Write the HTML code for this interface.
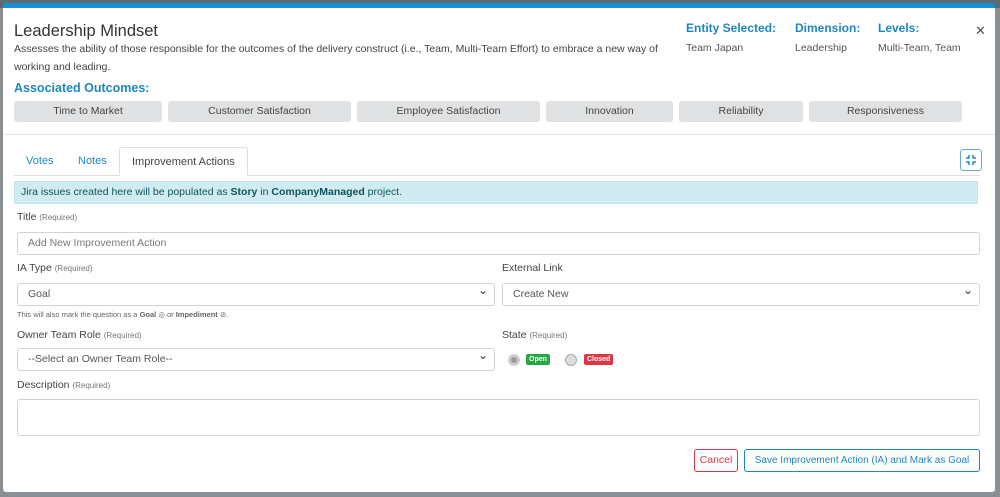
<!DOCTYPE html>
<html><head><style>
*{box-sizing:border-box;margin:0;padding:0}
body{width:1000px;height:497px;overflow:hidden;background:#8a8f94;font-family:"Liberation Sans",sans-serif;color:#333;position:relative}
.top{position:absolute;left:0;top:0;width:1000px;height:8px;background:#5b6b73}
.modal{position:absolute;left:3px;top:3px;width:992px;height:489px;background:#fff;border-top:5px solid #1a8fd0;border-radius:3px}
.blue{color:#1f87c0;font-weight:bold}
h1{position:absolute;left:11px;top:14px;font-size:16.5px;font-weight:normal;color:#333}
.desc{position:absolute;left:11px;top:32px;font-size:10.5px;line-height:18px;color:#444;width:670px}
.ao{position:absolute;left:11px;top:73px;font-size:12.5px}
.chip{position:absolute;top:93px;height:21px;background:#dfe1e3;border-radius:3px;font-size:10.5px;color:#444;text-align:center;line-height:21px}
.hd{position:absolute;top:13px;font-size:12px}
.hv{position:absolute;top:34px;font-size:10.5px;color:#555}
.x{position:absolute;left:972px;top:15px;font-size:13px;color:#555}
.sep{position:absolute;left:0;top:126px;width:992px;border-top:1px solid #e3e3e3}
.tabs{position:absolute;left:11px;top:139px;height:29px;width:966px;border-bottom:1px solid #ddd}
.tab{position:absolute;top:0;height:29px;line-height:28px;font-size:11px;color:#1f87c0;padding:0 12px}
.tab.a{color:#444;border:1px solid #ddd;border-bottom:1px solid #fff;border-radius:3px 3px 0 0;background:#fff;height:29px}
.cmp{position:absolute;left:957px;top:141px;width:22px;height:22px;border:1px solid #6aa8cf;border-radius:3px}
.info{position:absolute;left:11px;top:173px;width:964px;height:23px;background:#d1ecf1;border:1px solid #bee5eb;font-size:10.5px;line-height:21px;padding-left:6px;color:#0c5460}
.lbl{position:absolute;font-size:10.5px;color:#444}
.lbl small{font-size:8px;color:#777}
.inp{position:absolute;height:23px;border:1px solid #ced4da;border-radius:3px;font-size:10.5px;line-height:21px;padding-left:10px;color:#555}
.sel:after{content:"⌄";position:absolute;right:6px;top:-4px;font-size:12px;color:#333}
.badge{display:inline-block;font-size:7px;font-weight:bold;color:#fff;border-radius:2px;padding:0 3px;height:11px;line-height:11px}
.radio{position:absolute;width:12px;height:12px;border-radius:50%;border:1px solid #aaa;background:#ddd}
.btn{position:absolute;top:441px;height:23px;border-radius:3px;font-size:10.5px;line-height:21px;text-align:center;white-space:nowrap}
</style></head><body>
<div class="top"></div>
<div class="modal">
<h1>Leadership Mindset</h1>
<div class="desc">Assesses the ability of those responsible for the outcomes of the delivery construct (i.e., Team, Multi-Team Effort) to embrace a new way of working and leading.</div>
<div class="ao blue">Associated Outcomes:</div>
<div class="chip" style="left:11px;width:148px">Time to Market</div>
<div class="chip" style="left:165px;width:183px">Customer Satisfaction</div>
<div class="chip" style="left:354px;width:183px">Employee Satisfaction</div>
<div class="chip" style="left:543px;width:127px">Innovation</div>
<div class="chip" style="left:676px;width:124px">Reliability</div>
<div class="chip" style="left:806px;width:153px">Responsiveness</div>
<div class="hd blue" style="left:683px">Entity Selected:</div>
<div class="hv" style="left:683px">Team Japan</div>
<div class="hd blue" style="left:792px">Dimension:</div>
<div class="hv" style="left:792px">Leadership</div>
<div class="hd blue" style="left:875px">Levels:</div>
<div class="hv" style="left:875px">Multi-Team, Team</div>
<div class="x">✕</div>
<div class="sep"></div>
<div class="tabs">
<div class="tab" style="left:0">Votes</div>
<div class="tab" style="left:52px">Notes</div>
<div class="tab a" style="left:105px">Improvement Actions</div>
</div>
<div class="cmp"><svg width="20" height="20" viewBox="0 0 20 20" fill="none" stroke="#1f87c0" stroke-width="1.5"><path d="M8 5v3H5M12 5v3h3M8 15v-3H5M12 15v-3h3"/></svg></div>
<div class="info">Jira issues created here will be populated as <b>Story</b> in <b>CompanyManaged</b> project.</div>
<div class="lbl" style="left:14px;top:203px">Title <small>(Required)</small></div>
<div class="inp" style="left:14px;top:224px;width:963px;color:#777">Add New Improvement Action</div>
<div class="lbl" style="left:14px;top:254px">IA Type <small>(Required)</small></div>
<div class="inp sel" style="left:14px;top:275px;width:478px">Goal</div>
<div class="lbl" style="left:499px;top:254px">External Link</div>
<div class="inp sel" style="left:499px;top:275px;width:478px">Create New</div>
<div class="lbl" style="left:14px;top:302px;font-size:7.5px;color:#666">This will also mark the question as a <b>Goal</b> ◎ or <b>Impediment</b> ⊘.</div>
<div class="lbl" style="left:14px;top:321px">Owner Team Role <small>(Required)</small></div>
<div class="inp sel" style="left:14px;top:340px;width:478px">--Select an Owner Team Role--</div>
<div class="lbl" style="left:499px;top:321px">State <small>(Required)</small></div>
<div class="radio" style="left:505px;top:346px;background:#999;border:3px solid #ccc"></div>
<div class="badge" style="position:absolute;left:523px;top:346px;background:#28a745">Open</div>
<div class="radio" style="left:562px;top:346px"></div>
<div class="badge" style="position:absolute;left:581px;top:346px;background:#dc3545">Closed</div>
<div class="lbl" style="left:14px;top:371px">Description <small>(Required)</small></div>
<div class="inp" style="left:14px;top:391px;width:963px;height:37px"></div>
<div class="btn" style="left:691px;width:44px;border:1px solid #dc3545;color:#dc3545">Cancel</div>
<div class="btn" style="left:741px;width:236px;border:1px solid #1f87c0;color:#1f87c0;font-size:10px">Save Improvement Action (IA) and Mark as Goal</div>
</div>
</body></html>
